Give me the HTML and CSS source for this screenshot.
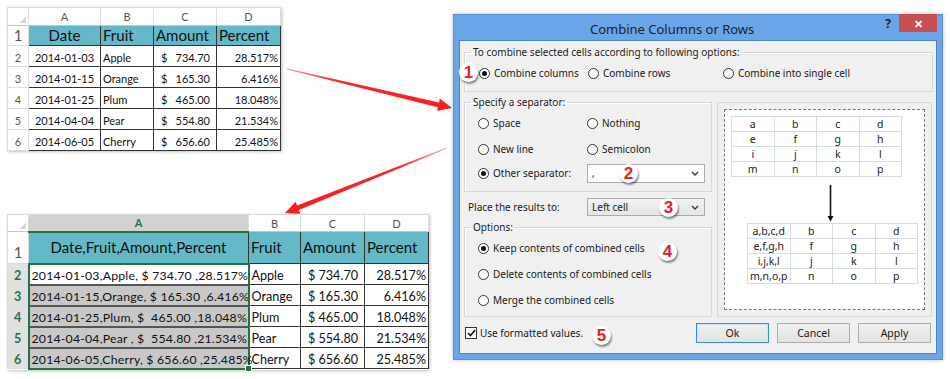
FILE: index.html
```html
<!DOCTYPE html>
<html lang="en">
<head>
    <meta charset="UTF-8">
    <title>Combine Columns or Rows</title>
    <link rel="stylesheet" href="styles.css">
</head>
<body>
<div class="page">
    <div class="sheets">
        <!-- source data -->
        <table class="sheet sheet-src">
            <colgroup>
                <col style="width:21px"><col style="width:72px"><col style="width:53px"><col style="width:63px"><col style="width:64px">
            </colgroup>
            <tr class="colhead">
                <td class="corner"></td><td>A</td><td>B</td><td>C</td><td>D</td>
            </tr>
            <tr class="titles">
                <td class="rownum">1</td>
                <td class="center">Date</td><td>Fruit</td><td>Amount</td><td>Percent</td>
            </tr>
            <tr class="data">
                <td class="rownum">2</td><td class="center">2014-01-03</td><td>Apple</td>
                <td class="money"><span>$</span><span>734.70</span></td><td class="right">28.517%</td>
            </tr>
            <tr class="data">
                <td class="rownum">3</td><td class="center">2014-01-15</td><td>Orange</td>
                <td class="money"><span>$</span><span>165.30</span></td><td class="right">6.416%</td>
            </tr>
            <tr class="data">
                <td class="rownum">4</td><td class="center">2014-01-25</td><td>Plum</td>
                <td class="money"><span>$</span><span>465.00</span></td><td class="right">18.048%</td>
            </tr>
            <tr class="data">
                <td class="rownum">5</td><td class="center">2014-04-04</td><td>Pear</td>
                <td class="money"><span>$</span><span>554.80</span></td><td class="right">21.534%</td>
            </tr>
            <tr class="data">
                <td class="rownum">6</td><td class="center">2014-06-05</td><td>Cherry</td>
                <td class="money"><span>$</span><span>656.60</span></td><td class="right">25.485%</td>
            </tr>
        </table>

        <!-- result after combining -->
        <table class="sheet sheet-out">
            <colgroup>
                <col style="width:21px"><col style="width:220px"><col style="width:52px"><col style="width:64px"><col style="width:64px">
            </colgroup>
            <tr class="colhead">
                <td class="corner"></td><td class="picked">A</td><td>B</td><td>C</td><td>D</td>
            </tr>
            <tr class="titles">
                <td class="rownum">1</td>
                <td class="center">Date,Fruit,Amount,Percent</td><td>Fruit</td><td>Amount</td><td>Percent</td>
            </tr>
            <tr class="data">
                <td class="rownum picked">2</td><td class="sel first">2014-01-03,Apple, $ 734.70 ,28.517%</td><td>Apple</td>
                <td class="money"><span>$</span><span>734.70</span></td><td class="right">28.517%</td>
            </tr>
            <tr class="data">
                <td class="rownum picked">3</td><td class="sel grey">2014-01-15,Orange, $ 165.30 ,6.416%</td><td>Orange</td>
                <td class="money"><span>$</span><span>165.30</span></td><td class="right">6.416%</td>
            </tr>
            <tr class="data">
                <td class="rownum picked">4</td><td class="sel grey">2014-01-25,Plum, $&nbsp; 465.00 ,18.048%</td><td>Plum</td>
                <td class="money"><span>$</span><span>465.00</span></td><td class="right">18.048%</td>
            </tr>
            <tr class="data">
                <td class="rownum picked">5</td><td class="sel grey">2014-04-04,Pear , $&nbsp; 554.80 ,21.534%</td><td>Pear</td>
                <td class="money"><span>$</span><span>554.80</span></td><td class="right">21.534%</td>
            </tr>
            <tr class="data">
                <td class="rownum picked">6</td><td class="sel grey last">2014-06-05,Cherry, $ 656.60 ,25.485%</td><td>Cherry</td>
                <td class="money"><span>$</span><span>656.60</span></td><td class="right">25.485%</td>
            </tr>
        </table>
    </div>

    <div class="dialog">
        <div class="titlebar">
            <span class="title">Combine Columns or Rows</span>
            <span class="help">?</span>
            <span class="close">&#x2715;</span>
        </div>
        <div class="dialog-body">
            <fieldset class="group group-how">
                <legend>To combine selected cells according to following options:</legend>
                <div class="choice-row">
                    <label class="opt w-cols"><span class="radio on"></span>Combine columns</label>
                    <label class="opt w-rows"><span class="radio"></span>Combine rows</label>
                    <label class="opt"><span class="radio"></span>Combine into single cell</label>
                </div>
            </fieldset>

            <div class="middle">
                <div class="settings">
                    <fieldset class="group group-sep">
                        <legend>Specify a separator:</legend>
                        <div class="sep-grid">
                            <label class="opt"><span class="radio"></span>Space</label>
                            <label class="opt"><span class="radio"></span>Nothing</label>
                            <label class="opt"><span class="radio"></span>New line</label>
                            <label class="opt"><span class="radio"></span>Semicolon</label>
                            <label class="opt"><span class="radio on"></span>Other separator:</label>
                            <div class="combo edit">
                                <span class="combo-text">,</span>
                                <svg class="chev" width="8" height="5" viewBox="0 0 8 5"><path d="M1 1 L4 4 L7 1" fill="none" stroke="#333" stroke-width="1.3"/></svg>
                            </div>
                        </div>
                    </fieldset>

                    <div class="place-row">
                        <span class="place-label">Place the results to:</span>
                        <div class="combo list">
                            <span class="combo-text">Left cell</span>
                            <svg class="chev" width="8" height="5" viewBox="0 0 8 5"><path d="M1 1 L4 4 L7 1" fill="none" stroke="#333" stroke-width="1.3"/></svg>
                        </div>
                    </div>

                    <fieldset class="group group-opts">
                        <legend>Options:</legend>
                        <div class="opts-list">
                            <label class="opt"><span class="radio on"></span>Keep contents of combined cells</label>
                            <label class="opt"><span class="radio"></span>Delete contents of combined cells</label>
                            <label class="opt"><span class="radio"></span>Merge the combined cells</label>
                        </div>
                    </fieldset>
                </div>

                <div class="preview">
                    <div class="preview-inner">
                        <table class="mini mini-before">
                            <tr><td>a</td><td>b</td><td>c</td><td>d</td></tr>
                            <tr><td>e</td><td>f</td><td>g</td><td>h</td></tr>
                            <tr><td>i</td><td>j</td><td>k</td><td>l</td></tr>
                            <tr><td>m</td><td>n</td><td>o</td><td>p</td></tr>
                        </table>
                        <div class="down-arrow">
                            <svg width="7" height="37" viewBox="0 0 7 37"><path d="M3.5 0 V33" stroke="#111" stroke-width="1.6"/><path d="M0.5 31 L3.5 36.5 L6.5 31 Z" fill="#111"/></svg>
                        </div>
                        <table class="mini mini-after">
                            <tr><td>a,b,c,d</td><td>b</td><td>c</td><td>d</td></tr>
                            <tr><td>e,f,g,h</td><td>f</td><td>g</td><td>h</td></tr>
                            <tr><td>i,j,k,l</td><td>j</td><td>k</td><td>l</td></tr>
                            <tr><td>m,n,o,p</td><td>n</td><td>o</td><td>p</td></tr>
                        </table>
                    </div>
                </div>
            </div>

            <div class="footer">
                <label class="check-opt">
                    <span class="checkbox"><svg width="9" height="8" viewBox="0 0 9 8"><path d="M1 4 L3.5 6.5 L8 1" fill="none" stroke="#111" stroke-width="1.6"/></svg></span>
                    Use formatted values.
                </label>
                <div class="buttons">
                    <button type="button" class="btn default">Ok</button>
                    <button type="button" class="btn">Cancel</button>
                    <button type="button" class="btn">Apply</button>
                </div>
            </div>
        </div>

        <!-- step markers -->
        <span class="badge b1">1</span>
        <span class="badge b2">2</span>
        <span class="badge b3">3</span>
        <span class="badge b4">4</span>
        <span class="badge b5">5</span>
    </div>
</div>

<svg class="arrows" width="950" height="379" viewBox="0 0 950 379">
    <defs>
        <linearGradient id="fade1" x1="287" y1="69" x2="452" y2="108" gradientUnits="userSpaceOnUse">
            <stop offset="0" stop-color="#ff3030" stop-opacity="0.5"/>
            <stop offset="0.3" stop-color="#f82828"/>
            <stop offset="1" stop-color="#f52020"/>
        </linearGradient>
        <linearGradient id="fade2" x1="447" y1="148" x2="285" y2="213" gradientUnits="userSpaceOnUse">
            <stop offset="0" stop-color="#ff3030" stop-opacity="0.4"/>
            <stop offset="0.3" stop-color="#f82828"/>
            <stop offset="1" stop-color="#f52020"/>
        </linearGradient>
    </defs>
    <polygon fill="url(#fade1)" points="287.1,68.5 439.0,102.4 439.8,98.6 452,108 437.0,111.0 437.8,107.2 286.9,69.5"/>
    <polygon fill="url(#fade2)" points="446.8,147.5 297.1,205.5 295.6,201.8 285,213 300.4,213.8 298.9,210.1 447.2,148.5"/>
</svg>
</body>
</html>
```

FILE: styles.css
```css
body {
    margin: 0;
    width: 950px;
    height: 379px;
    overflow: hidden;
    background: #fff;
    position: relative;
    font-family: "Noto Sans", "Liberation Sans", sans-serif;
}

.page {
    display: flex;
    padding: 7px 0 0 7px;
}

/* ---------- spreadsheets ---------- */

.sheets {
    width: 421px;
    display: flex;
    flex-direction: column;
    align-items: flex-start;
    gap: 63px;
}

.sheet {
    border-collapse: collapse;
    table-layout: fixed;
    font-family: Lato, "Liberation Sans", sans-serif;
    color: #111;
    box-shadow: 1px 1px 3px rgba(0, 0, 0, 0.25);
    background: #fff;
}

.sheet-src { width: 273px; }
.sheet-out { width: 421px; }

.sheet td {
    padding: 0 2px;
    line-height: 13px;
    white-space: nowrap;
    overflow: hidden;
    vertical-align: bottom;
    border: 1px solid #333;
}

.sheet .colhead td {
    font-size: 11px;
    color: #555;
    text-align: center;
    vertical-align: middle;
    border: 1px solid #dcdcdc;
    border-bottom-color: #c8c8c8;
    background: #fff;
}

.sheet .colhead td.corner {
    background: linear-gradient(to top left, #d6d6d6 0 30%, #fff 30%) no-repeat right 2px bottom 2px / 11px 11px, #fff;
}

.sheet .colhead td.picked {
    background: #d2d2d2;
    color: #217346;
    font-weight: bold;
    border-bottom: 2px solid #217346;
}

.sheet td.rownum {
    font-size: 11px;
    color: #555;
    text-align: center;
    border: 1px solid #dcdcdc;
    background: #fff;
    padding: 0 0 2px;
}

.sheet td.rownum.picked {
    background: #e1e1e1;
    color: #217346;
    font-weight: bold;
    border-right: 2px solid #217346;
}

.sheet .titles td {
    background: #63b9c7;
}

.sheet .titles td.rownum { background: #fff; }

.center { text-align: center; }
.right { text-align: right; }

.sheet td.money span:first-child {
    float: left;
    padding-left: 5px;
}

.sheet td.money span:last-child {
    float: right;
    padding-right: 4px;
}

.sheet-src .colhead { height: 18px; }
.sheet-src .titles { height: 20px; }
.sheet-src .data { height: 21px; }

.sheet-src .titles td {
    font-size: 15px;
    line-height: 17px;
    padding-bottom: 1px;
}

.sheet-src .data td {
    font-size: 11px;
    padding-bottom: 2px;
}

.sheet-out .colhead { height: 17px; }
.sheet-out .titles { height: 32px; }
.sheet-out .data { height: 21px; }

.sheet-out .titles td {
    font-size: 15px;
    line-height: 17px;
    vertical-align: middle;
}

.sheet-out .titles td.rownum { vertical-align: bottom; }

.sheet-out .data td {
    font-size: 12.6px;
    line-height: 15px;
    padding-bottom: 1px;
}

.sheet-out td.sel {
    font-size: 12.3px;
    letter-spacing: 0.2px;
    border-left: 2px solid #217346;
    border-right: 2px solid #217346;
    border-bottom: 2px solid #555;
    padding-left: 2px;
}

.sheet-out td.sel.first { border-top: 2px solid #217346; }

.sheet-out td.sel.grey { background: #c8c8c8; }

.sheet-out td.sel.last {
    border-bottom: 2px solid #217346;
    position: relative;
    overflow: visible;
}

.sheet-out td.sel.last::after {
    content: "";
    position: absolute;
    right: -4px;
    bottom: -4px;
    width: 5px;
    height: 5px;
    background: #217346;
    border: 1px solid #fff;
}

/* ---------- dialog ---------- */

.dialog {
    position: relative;
    margin: 7px 0 0 25px;
    width: 490px;
    height: 346px;
    box-sizing: border-box;
    background: #6aa5e9;
    border: 1px solid #5a90d0;
    padding: 0 5px 5px;
    box-shadow: 0 0 4px rgba(0, 0, 0, 0.25);
    font-size: 10px;
    color: #1a1a1a;
}

.titlebar {
    height: 25px;
    display: flex;
    align-items: center;
    position: relative;
}

.title {
    flex: 1;
    text-align: center;
    font-size: 13px;
    color: #222;
    padding-top: 2px;
}

.help {
    font-weight: bold;
    font-size: 12px;
    color: #222;
    margin-right: 8px;
    margin-top: -8px;
}

.close {
    width: 38px;
    height: 18px;
    background: #c75050;
    color: #fff;
    font-size: 11px;
    font-weight: bold;
    display: flex;
    align-items: center;
    justify-content: center;
    align-self: flex-start;
    margin-top: -1px;
}

.dialog-body {
    height: 314px;
    box-sizing: border-box;
    background: #f0f0f0;
    border: 1px solid #4f86c6;
    padding: 4px 3px 0 4px;
}

.group {
    margin: 0;
    border: 1px solid #d8d8d8;
    box-shadow: inset 1px 1px 0 #fff;
    padding: 0;
    min-width: 0;
}

.group legend {
    padding: 0 2px;
    margin-left: 6px;
    line-height: 14px;
}

.opt {
    display: flex;
    align-items: center;
    white-space: nowrap;
    gap: 4px;
}

.radio {
    width: 11px;
    height: 11px;
    box-sizing: border-box;
    border: 1px solid #333;
    border-radius: 50%;
    background: #fff;
    position: relative;
    flex: none;
}

.radio.on::after {
    content: "";
    position: absolute;
    left: 2px;
    top: 2px;
    width: 5px;
    height: 5px;
    border-radius: 50%;
    background: #111;
}

.group-how {
    height: 47px;
    box-sizing: border-box;
}

.choice-row {
    display: flex;
    align-items: center;
    height: 14px;
    padding: 7px 0 0 14px;
}

.w-cols { width: 109px; }
.w-rows { width: 135px; }

.middle {
    display: flex;
    gap: 5px;
    margin-top: 3px;
}

.settings {
    width: 248px;
}

.group-sep {
    height: 97px;
    box-sizing: border-box;
}

.sep-grid {
    display: grid;
    grid-template-columns: 109px 118px;
    grid-template-rows: 26px 26px 22px;
    align-items: center;
    padding: 1px 0 0 13px;
}

.combo {
    height: 19px;
    box-sizing: border-box;
    border: 1px solid #acacac;
    display: flex;
    align-items: center;
    padding: 0 5px 0 4px;
}

.combo.edit {
    background: #fff;
    border-color: #abadb3;
}

.combo.list {
    width: 118px;
    height: 18px;
    background: linear-gradient(#f2f2f2, #e5e5e5);
}

.combo-text { flex: 1; }

.place-row {
    display: flex;
    align-items: center;
    margin-top: 6px;
    padding-left: 4px;
}

.place-label { width: 119px; }

.group-opts {
    margin-top: 4px;
    height: 97px;
    box-sizing: border-box;
}

.opts-list {
    display: grid;
    grid-template-rows: 26px 26px 26px;
    align-items: center;
    padding: 1px 0 0 13px;
}

.preview {
    width: 215px;
    height: 215px;
    box-sizing: border-box;
    margin-top: 7px;
    border: 1px solid #d8d8d8;
    padding: 6px;
}

.preview-inner {
    height: 100%;
    box-sizing: border-box;
    border: 1px dashed #777;
    background: #fff;
    padding: 6px 0 0 6px;
}

.mini {
    border-collapse: collapse;
    table-layout: fixed;
    width: 171px;
    font-size: 10.5px;
    color: #222;
}

.mini td {
    border: 1px solid #d3daea;
    height: 14px;
    padding: 0;
    text-align: center;
    line-height: 14px;
}

.mini-after {
    margin-left: 16px;
}

.down-arrow {
    padding: 8px 0 0 96px;
    height: 46px;
    box-sizing: border-box;
}

.down-arrow svg { display: block; }

.footer {
    display: flex;
    align-items: center;
    margin-top: 6px;
    height: 20px;
    padding-right: 2px;
}

.check-opt {
    display: flex;
    align-items: center;
    gap: 3px;
    padding-left: 1px;
}

.checkbox {
    width: 12px;
    height: 12px;
    box-sizing: border-box;
    border: 1px solid #333;
    background: #fff;
    display: flex;
    align-items: center;
    justify-content: center;
}

.buttons {
    margin-left: auto;
    display: flex;
    gap: 8px;
}

.btn {
    width: 73px;
    height: 20px;
    font-family: inherit;
    font-size: 10.5px;
    color: #1a1a1a;
    background: linear-gradient(#f0f0f0, #e3e3e3);
    border: 1px solid #adadad;
    padding: 0;
}

.btn.default {
    border-color: #3c8be0;
    box-shadow: inset 0 0 0 1px #cfe3f8;
}

.badge {
    position: absolute;
    width: 19px;
    height: 19px;
    border-radius: 50%;
    background: #fff;
    box-shadow: 1px 2px 2px rgba(0, 0, 0, 0.45);
    color: #e52222;
    font-family: "Liberation Sans", Arial, sans-serif;
    font-weight: bold;
    font-size: 17px;
    line-height: 19px;
    text-align: center;
}

/* badge centres, relative to the dialog box */
.b1 { left: 5px;   top: 48px; }
.b2 { left: 165px; top: 149px; }
.b3 { left: 205px; top: 183px; }
.b4 { left: 204px; top: 227px; }
.b5 { left: 138px; top: 311px; }

.arrows {
    position: absolute;
    left: 0;
    top: 0;
    pointer-events: none;
}
```
